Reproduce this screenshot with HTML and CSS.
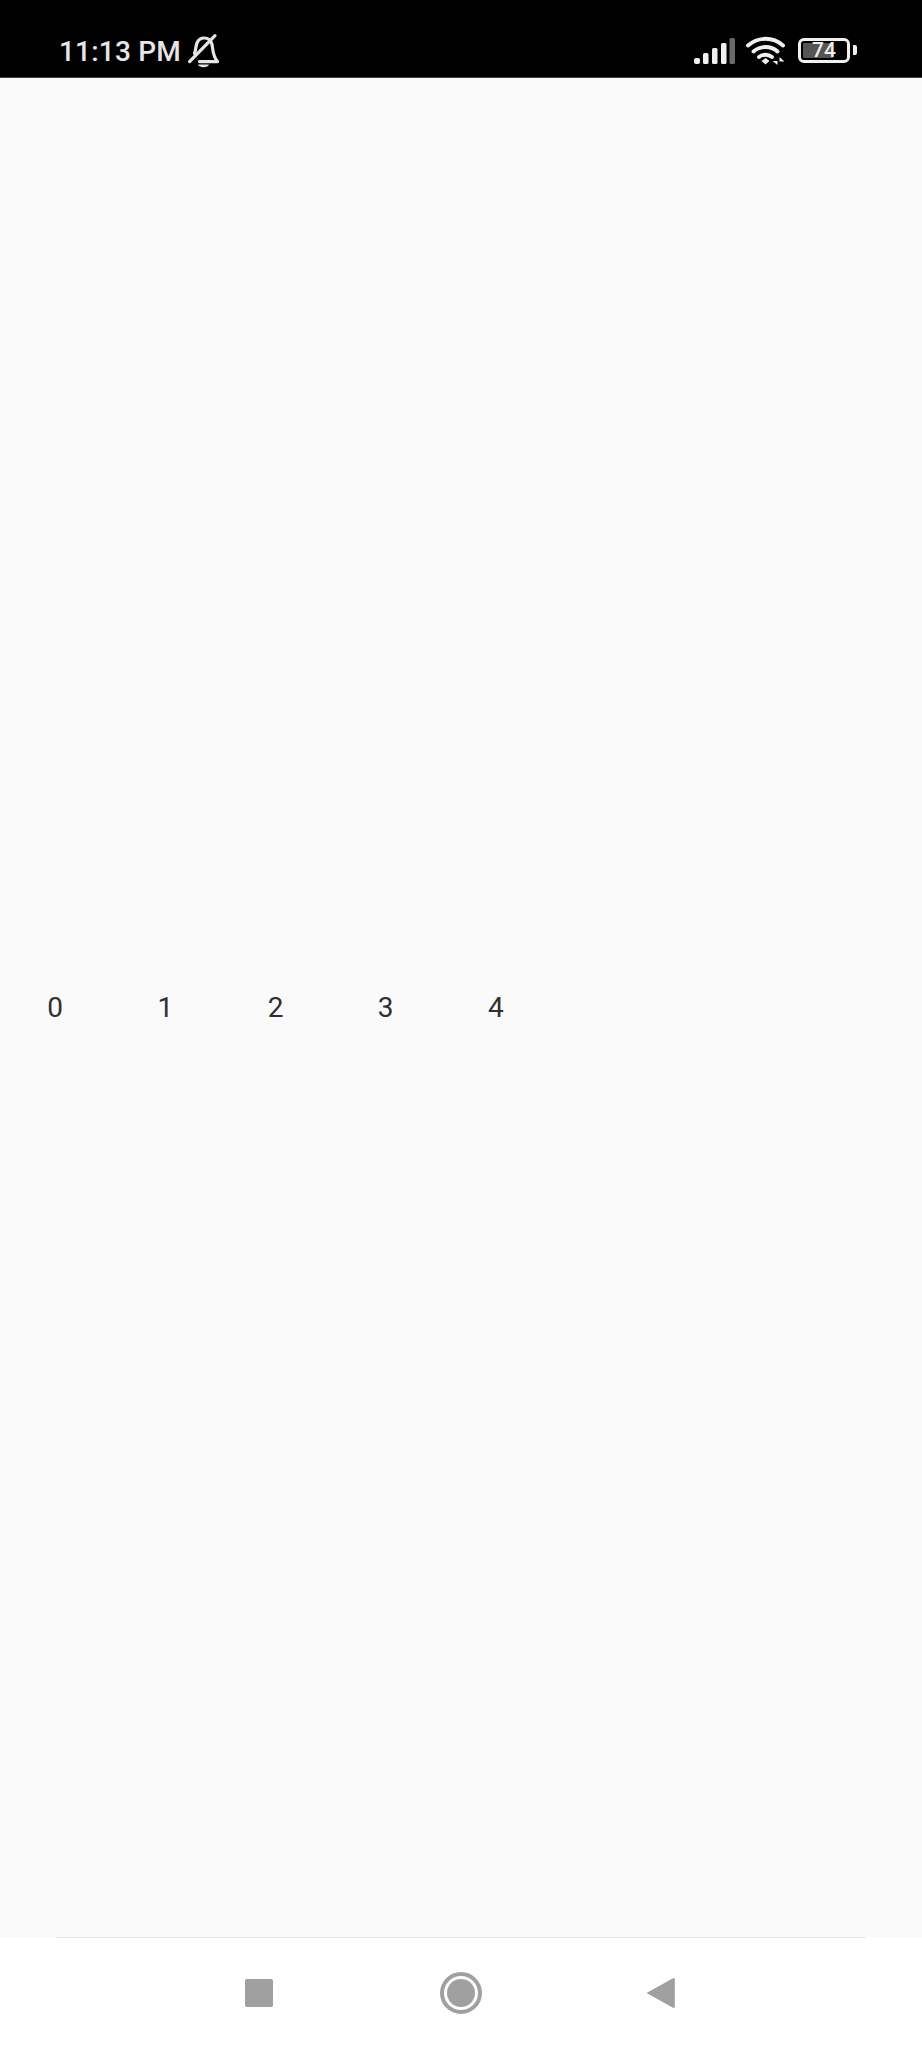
FILE: index.html
```html
<!DOCTYPE html>
<html lang="en">
<head>
    <meta charset="UTF-8">
    <meta name="viewport" content="width=device-width, initial-scale=1.0">
    <title>Tabs</title>
    <link rel="stylesheet" href="styles.css">
</head>
<body>
    <header class="status-bar">
        <div class="status-left">
            <span class="clock">11:13 PM</span>
            <svg class="bell" width="34" height="36" viewBox="0 0 34 36" fill="none">
                <path d="M7.500 20.500C9 17 8.500 13.500 10 10C11.500 6.500 14 5 17 5C21 5 24 7.500 25 11.500C26 16 25.500 23 30.500 28.600H12.500" stroke="#e6e6e6" stroke-width="3.200" stroke-linejoin="round" stroke-linecap="round"/>
                <path d="M2.600 28.600L28 2.600" stroke="#e6e6e6" stroke-width="3.200" stroke-linecap="round"/>
                <path d="M11 31.500H22C21 35 12 35 11 31.500Z" fill="#e6e6e6"/>
            </svg>
        </div>
        <div class="status-right">
            <svg class="signal" width="41" height="26" viewBox="0 0 41 26">
                <rect x="0" y="20" width="6" height="6" rx="2" fill="#f0f0f0"/>
                <rect x="9" y="15" width="5.500" height="11" rx="1.500" fill="#f0f0f0"/>
                <rect x="18" y="10" width="5.500" height="16" rx="1.500" fill="#f0f0f0"/>
                <rect x="27" y="5" width="5.500" height="21" rx="1.500" fill="#f0f0f0"/>
                <rect x="35.500" y="0" width="5.500" height="26" rx="1.500" fill="#6a6a6a"/>
            </svg>
            <svg class="wifi" width="39" height="29" viewBox="0 0 39 29" fill="none">
                <path d="M2 9.500C12 0.500 27 0.500 37 9.500" stroke="#f0f0f0" stroke-width="3.800" stroke-linecap="round"/>
                <path d="M7.500 15.500C14 9.500 25 9.500 31.500 15.500" stroke="#f0f0f0" stroke-width="3.800" stroke-linecap="round"/>
                <path d="M13 21C16.500 18 22.500 18 26 21" stroke="#f0f0f0" stroke-width="3.800" stroke-linecap="round"/>
                <path d="M15.500 25L19.500 22L23.500 25L19.500 28.500Z" fill="#f0f0f0"/>
                <path d="M31.500 21V29L26.500 25H31.500Z" fill="#f0f0f0"/>
                <path d="M33.500 29V21L38.500 25.500H33.500Z" fill="#f0f0f0"/>
            </svg>
            <div class="battery">
                <div class="battery-body">
                    <div class="battery-level"></div>
                    <span class="battery-text">74</span>
                </div>
                <div class="battery-cap"></div>
            </div>
        </div>
    </header>

    <main class="content">
        <div class="tabs">
            <div class="tab">0</div>
            <div class="tab">1</div>
            <div class="tab">2</div>
            <div class="tab">3</div>
            <div class="tab">4</div>
        </div>
    </main>

    <footer class="nav-bar">
        <div class="nav-line"></div>
        <div class="nav-buttons">
            <div class="nav-square"></div>
            <div class="nav-home"><div class="nav-home-dot"></div></div>
            <svg class="nav-back" width="29" height="32" viewBox="0 0 29 32">
                <path d="M0.500 16L27 1.300Q28.800 0.600 28.800 2.500V29.500Q28.800 31.400 27 30.700Z" fill="#a0a0a0"/>
            </svg>
        </div>
    </footer>
</body>
</html>
```

FILE: styles.css
```css
* {
    margin: 0;
    padding: 0;
    box-sizing: border-box;
}

body {
    background-color: #fafafa;
    height: 100vh;
    display: flex;
    flex-direction: column;
    font-family: Roboto, "Liberation Sans", sans-serif;
    overflow: hidden;
}

.status-bar {
    height: 78px;
    background-color: #000;
    border-bottom: 1px solid #444;
    display: flex;
    justify-content: space-between;
    align-items: flex-start;
    padding: 33px 65px 0 59px;
}

.status-left {
    display: flex;
    align-items: flex-start;
    gap: 6px;
}

.clock {
    color: #e6e6e6;
    font-size: 28px;
    font-weight: 500;
    letter-spacing: 0.2px;
    line-height: 34px;
    margin-top: 2px;
}

.status-right {
    display: flex;
    align-items: center;
    gap: 11px;
    padding-top: 3px;
}

.battery {
    display: flex;
    align-items: center;
    gap: 3px;
    margin-left: 2px;
    margin-top: -1px;
}

.battery-body {
    width: 52px;
    height: 25px;
    border: 3px solid #f0f0f0;
    border-radius: 6px;
    padding: 2px;
    display: flex;
    position: relative;
}

.battery-level {
    width: 72%;
    background-color: #555;
    border-radius: 1px;
}

.battery-text {
    position: absolute;
    left: 0;
    right: 0;
    top: -2px;
    text-align: center;
    color: #eee;
    font-size: 21px;
    font-weight: 500;
    line-height: 23px;
}

.battery-cap {
    width: 4px;
    height: 10px;
    background-color: #f0f0f0;
    border-radius: 0 2px 2px 0;
}

.content {
    flex: 1;
    padding-top: 910px;
}

.tabs {
    display: flex;
    width: 551px;
}

.tab {
    flex: 1;
    text-align: center;
    color: #303030;
    font-size: 28px;
    line-height: 40px;
}

.nav-bar {
    height: 111px;
    background-color: #fff;
}

.nav-line {
    height: 1px;
    margin: 0 56px;
    background-color: #e4e4e4;
}

.nav-buttons {
    height: 110px;
    display: flex;
    align-items: flex-start;
    padding: 40px 0 0 245px;
}

.nav-square {
    width: 28px;
    height: 28px;
    margin-top: 1px;
    background-color: #a0a0a0;
    border-radius: 2px;
}

.nav-home {
    width: 42px;
    height: 42px;
    margin-left: 167px;
    margin-top: -6px;
    border: 4px solid #a0a0a0;
    border-radius: 50%;
    display: flex;
    align-items: center;
    justify-content: center;
}

.nav-home-dot {
    width: 28px;
    height: 28px;
    background-color: #a0a0a0;
    border-radius: 50%;
}

.nav-back {
    margin-left: 164px;
    margin-top: -1px;
}
```
